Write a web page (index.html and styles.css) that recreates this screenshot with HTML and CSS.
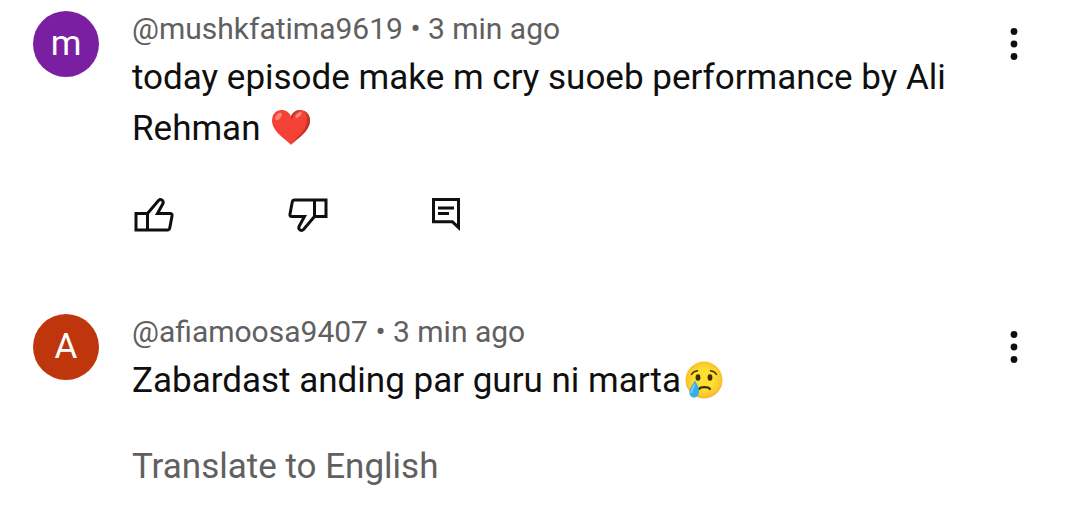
FILE: index.html
```html
<!DOCTYPE html>
<html lang="en">
<head>
  <meta charset="UTF-8">
  <meta name="viewport" content="width=device-width, initial-scale=1.0">
  <title>Comments</title>
  <link rel="stylesheet" href="styles.css">
</head>
<body>
  <main class="comments">
    <article class="comment">
      <div class="avatar avatar-purple">m</div>
      <div class="content">
        <div class="meta"><a href="#">@mushkfatima9619</a> • 3 min ago</div>
        <p class="text">today episode make m cry suoeb performance by Ali Rehman <svg class="emoji" viewBox="0 0 40 40" role="img" aria-label="red heart">
          <path d="M20 37C15 31 1 24 1 12.500C1 6 5.500 2 10.500 2C15 2 18.500 4.500 20 8.500C21.500 4.500 25 2 29.500 2C34.500 2 39 6 39 12.500C39 24 25 31 20 37Z" fill="#f44336"/>
          <path d="M33 3C36.500 5 39 8 39 12.500C39 24 25 31 20 37C25 29 35.500 23 36 12C36.200 8 35 5 33 3Z" fill="#c33529"/>
          <path d="M20 8.500C21.500 4.500 25 2 29 2C25 4.500 22.500 7 20.500 12C20 11 19.800 10 20 8.500Z" fill="#c33529"/>
          <ellipse cx="7.500" cy="8.500" rx="2.300" ry="4.300" transform="rotate(38 7.500 8.500)" fill="#ff847a"/>
          <ellipse cx="27.500" cy="7" rx="1.800" ry="3.800" transform="rotate(48 27.500 7)" fill="#ff847a"/>
        </svg></p>
        <div class="actions">
          <button type="button" class="action" aria-label="Like">
            <svg class="icon" viewBox="0 0 44 44"><path d="M4 20.500H15.500V37H4ZM15.500 20.500L26.500 7.500C28.500 5.500 32 7 31 10.500L25.500 20.500H38C39.800 20.500 40.300 21.500 40 23L37.800 34.800C37.500 36.300 36.800 37 35.500 37H15.500"/></svg>
          </button>
          <button type="button" class="action action-dislike" aria-label="Dislike">
            <svg class="icon" viewBox="0 0 44 44"><path transform="rotate(180 22 22)" d="M4 20.500H15.500V37H4ZM15.500 20.500L26.500 7.500C28.500 5.500 32 7 31 10.500L25.500 20.500H38C39.800 20.500 40.300 21.500 40 23L37.800 34.800C37.500 36.300 36.800 37 35.500 37H15.500"/></svg>
          </button>
          <button type="button" class="action" aria-label="Reply">
            <svg class="icon" viewBox="0 0 44 44"><path d="M9.500 6.500H34.500V34.500L28.500 28.800H9.500ZM14 15H30M14 20.500H25"/></svg>
          </button>
        </div>
      </div>
      <button type="button" class="menu" aria-label="More options">
        <svg class="dots" viewBox="0 0 8 34"><circle cx="4" cy="4.500" r="3.400"/><circle cx="4" cy="17" r="3.400"/><circle cx="4" cy="29.500" r="3.400"/></svg>
      </button>
    </article>

    <article class="comment">
      <div class="avatar avatar-orange">A</div>
      <div class="content">
        <div class="meta"><a href="#">@afiamoosa9407</a> • 3 min ago</div>
        <p class="text">Zabardast anding par guru ni marta<svg class="emoji" viewBox="0 0 40 40" role="img" aria-label="crying face">
          <defs>
            <radialGradient id="face" cx="50%" cy="48%" r="52%">
              <stop offset="0.500" stop-color="#fde030"/>
              <stop offset="0.900" stop-color="#f9c52c"/>
              <stop offset="1" stop-color="#efa72e"/>
            </radialGradient>
          </defs>
          <circle cx="21" cy="20" r="18.500" fill="url(#face)"/>
          <g fill="#422b0d">
            <ellipse cx="15" cy="17.500" rx="2.400" ry="3.200"/>
            <ellipse cx="27" cy="17.500" rx="2.400" ry="3.200"/>
          </g>
          <g fill="none" stroke="#422b0d" stroke-linecap="round">
            <path d="M8.500 14.500C10 12 12 11 14.500 10.800M27.500 10.800C30 11 32 12 33.500 14.500" stroke-width="1.400"/>
            <path d="M16 29C18 26.500 25 26.500 27 29" stroke-width="2.200"/>
          </g>
          <path d="M12 20.500C14 24 16 27.500 16 31.500C16 35 14 37.500 11 37.500C8 37.500 6 35 6.500 31.500C7 27.500 10 24.500 12 20.500Z" fill="#35aee8"/>
          <path d="M11.500 25C10 28 8.500 30 8.500 32.500" fill="none" stroke="#81d4fa" stroke-width="1.500" stroke-linecap="round"/>
        </svg></p>
        <button type="button" class="translate">Translate to English</button>
      </div>
      <button type="button" class="menu" aria-label="More options">
        <svg class="dots" viewBox="0 0 8 34"><circle cx="4" cy="4.500" r="3.400"/><circle cx="4" cy="17" r="3.400"/><circle cx="4" cy="29.500" r="3.400"/></svg>
      </button>
    </article>
  </main>
</body>
</html>
```
FILE: styles.css
```css
body {
  margin: 0;
  background: #fff;
  color: #0f0f0f;
  font-family: Roboto, "Liberation Sans", sans-serif;
}
button {
  padding: 0;
  border: none;
  background: none;
  color: inherit;
  font: inherit;
  cursor: pointer;
}
svg { display: block; }
.comment {
  display: flex;
  align-items: flex-start;
  padding: 11px 42px 0 33px;
}
.comment + .comment { margin-top: 62px; }
.avatar {
  flex: none;
  width: 66px;
  margin-right: 33px;
  border-radius: 50%;
  color: #fff;
  font-size: 35px;
  line-height: 66px;
  text-align: center;
}
.avatar-purple { background: #7b1fa2; }
.avatar-orange { background: #bf360c; }
.content {
  flex: 1;
  min-width: 0;
}
.meta {
  color: #606060;
  font-size: 30px;
  line-height: 36px;
}
.meta a {
  color: inherit;
  text-decoration: none;
}
.text {
  margin: 5px 0 35px;
  font-size: 35px;
  line-height: 51px;
}
.emoji {
  display: inline-block;
  width: 40px;
  height: 40px;
  margin-left: 2px;
  vertical-align: -8px;
}
.actions {
  display: flex;
  gap: 94px;
}
.action {
  display: flex;
  align-items: center;
  height: 52px;
}
.action-dislike { margin-left: 16px; }
.icon {
  width: 44px;
  height: 44px;
  fill: none;
  stroke: #0f0f0f;
  stroke-width: 3;
}
.menu {
  display: flex;
  flex: none;
  align-items: center;
  justify-content: center;
  width: 48px;
  height: 66px;
}
.dots {
  width: 8px;
  height: 34px;
  fill: #0f0f0f;
}
.translate {
  display: block;
  color: #606060;
  font-size: 35px;
  line-height: 51px;
}
```
